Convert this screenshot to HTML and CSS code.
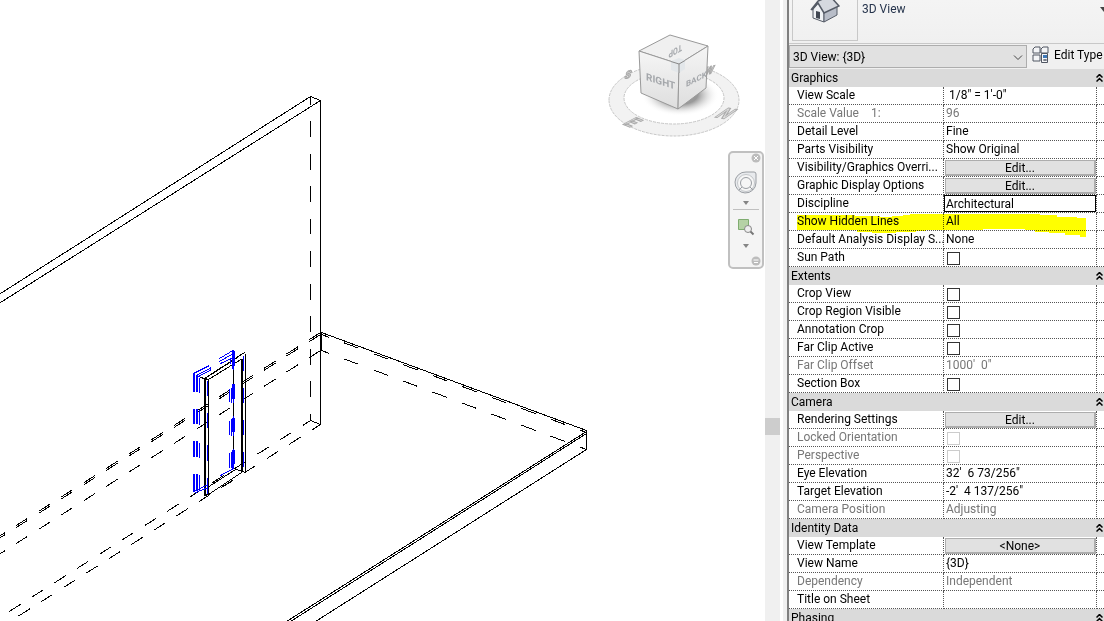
FILE: index.html
```
<!DOCTYPE html>
<html lang="en">
<head>
  <meta charset="UTF-8">
  <title>3D View</title>
  <link rel="stylesheet" href="styles.css">
</head>
<body>
  <main class="viewport">
    <svg class="drawing" aria-label="3D model">
      <g transform="translate(.5 .5)">
        <!-- wall -->
        <path d="M0 293L310 96L320 100L0 302M320 100V424L310 420"/>
        <path d="M310 96V420" stroke-dasharray="16 16.5" stroke-dashoffset="8"/>
        <path d="M310 420L0 616.5" stroke-dasharray="13.3 13.4" stroke-dashoffset="3.9"/>
        <path d="M320 424L11 620" stroke-dasharray="13.3 13.4" stroke-dashoffset="3"/>
        <!-- floor -->
        <path d="M321 350V332L586 430V449L315 621M586 431L286 621M586 433L290 621"/>
        <path d="M321 334L586 432M321 350L586 449" stroke-dasharray="15.5 16" stroke-dashoffset="7.5"/>
        <path d="M320 332L0 535M320 334L0 537M320 350L0 553" stroke-dasharray="13.3 13.4"/>
        <!-- door, near side -->
        <path d="M204 378V495M205 378V495M208 379V494M241 359V471M242 358V471M245 353V472M233 368V468L245 472M204 378L244 352L245 353M208 379L242 358M206 377L237 357M200 377L208 379M204 495L208 494M207 487L235 469M208 494L244 470M221 487L231 481"/>
        <!-- door, hidden side -->
        <g class="blue">
          <path d="M193 373V391M194 373V391M196 374V391M197 374V391M199 377V392M193 408V423M194 408V423M196 408V423M197 408V423M199 409V424M193 440V456M194 440V456M196 440V456M197 440V456M199 442V457M193 473V490M194 473V490M196 473V490M197 473V490M199 474V490"/>
          <path d="M207 380V395M207 412V427M207 444V460M207 477V493"/>
          <path d="M232 349V368M233 349V369M234 350V365M230 357V363M232 383V398M233 383V402M234 383V398M229 388V401M231 387V402M232 417V431M233 415V435M234 417V431M229 420V434M231 418V435M232 449V467M233 448V468M234 449V463M229 452V467M231 451V467"/>
          <path d="M243 355V370M243 387V402M243 419V434M243 451V466"/>
          <path d="M193 373L209 365M196 375L211 367M198 376L211 369M219 358L234 349M219 361L233 353M220 363L235 356M193 491L208 484M195 492L208 487M220 475L233 468"/>
        </g>
      </g>
    </svg>

    <svg class="viewcube" width="140" height="110" viewBox="604 30 140 110" aria-label="ViewCube">
      <defs>
        <radialGradient id="shade"><stop offset="45%" stop-color="#999"/><stop offset="100%" stop-color="#fff" stop-opacity="0"/></radialGradient>
        <linearGradient id="side" x2="0" y2="1"><stop stop-color="#f5f5f5"/><stop offset="1" stop-color="#dedede"/></linearGradient>
      </defs>
      <path fill="#f2f2f2" fill-rule="evenodd" stroke="#c6c6c6" stroke-dasharray="3 1" d="M609 100a65 36 0 0 1 130 0a65 36 0 0 1-130 0zM624 98a50 26 0 0 0 100 0a50 26 0 0 0-100 0z"/>
      <ellipse cx="680" cy="95" rx="39" ry="21" fill="url(#shade)"/>
      <g class="compass">
        <text transform="translate(622 124) rotate(22) skewX(-40)">E</text>
        <text transform="translate(714 117) rotate(10) skewX(-45)">N</text>
        <text class="far" transform="translate(624 79) rotate(-12) skewX(-30)">S</text>
        <text class="far" transform="translate(704 75) rotate(-12) skewX(-30)">W</text>
      </g>
      <g stroke="#999" stroke-linejoin="round">
        <path fill="#f0f0f0" d="M670 35L708 46L679 64L639 51z"/>
        <path fill="url(#side)" d="M639 51L679 64L678 109L641 93z"/>
        <path fill="url(#side)" d="M679 64L708 46L706 88L678 109z"/>
      </g>
      <path fill="#e3e7ea" d="M671 61l8-3 6 2v9l-6 4-8-3z"/>
      <path stroke="#888" d="M671 61.500L679 64L685 60.500M679 64V73" fill="none"/>
      <g class="face">
        <text transform="translate(646 80) skewY(18)">RIGHT</text>
        <text class="back" transform="translate(686 87) skewY(-27)">BACK</text>
        <text class="top" transform="translate(682 44) rotate(150) skewX(-30)">TOP</text>
      </g>
    </svg>

    <nav class="navbar" aria-label="Navigation bar">
      <button class="mini end" aria-label="Close"><svg width="10" height="10"><circle cx="5" cy="5" r="4.500" fill="#bcbcbc"/><path d="M3 3l4 4M7 3L3 7" stroke="#fff"/></svg></button>
      <button class="wheel" aria-label="Steering wheel"><svg width="24" height="24" fill="none" stroke="#9a9ea3"><path fill="#e8eaed" d="M12 1h8q2 0 2 2v9a10.500 10.500 0 1 1-10-11z"/><circle cx="12" cy="12" r="8.500" fill="#f6f6f6" stroke="#c4c7ca"/><circle cx="12" cy="12" r="5.500"/><path d="M5 19l3-3M16 16l3 3"/></svg></button>
      <button class="mini" aria-label="Wheel options"><svg width="6" height="4"><path fill="#858585" d="M0 0h6L3 4z"/></svg></button>
      <hr>
      <button class="zoom" aria-label="Zoom"><svg width="18" height="18" fill="none"><path fill="#b5d2a5" stroke="#7fac70" d="M1.500 1.500h10v10h-10z"/><circle cx="11" cy="11" r="3.500" fill="#eee" stroke="#888"/><path stroke="#777" stroke-width="2" d="M13.500 13.500l3 3"/></svg></button>
      <button class="mini" aria-label="Zoom options"><svg width="6" height="4"><path fill="#858585" d="M0 0h6L3 4z"/></svg></button>
      <button class="mini end last" aria-label="Minimize"><svg width="10" height="10"><circle cx="5" cy="5" r="4.500" fill="#bcbcbc"/><path d="M2.500 4h5M3 6.500h4" stroke="#fff"/></svg></button>
    </nav>
  </main>

  <div class="scrollbar"><div class="thumb"></div></div>

  <aside class="panel">
    <header class="family">
      <div class="preview">
        <svg width="30" height="24" viewBox="0 0 30 24">
          <path fill="#f0f2f5" stroke="#555b66" d="M3 9V18L14 22V9L8 3z"/>
          <path fill="#b8bdc8" stroke="#555b66" d="M14 10L27 6V15L14 22z"/>
          <path fill="#d5d8df" stroke="#555b66" stroke-width="1.500" d="M1 10L8 1L20-4L29 6L14 13L8 3L2 10"/>
          <path fill="#414752" d="M6 11l4 1v7l-4-1z"/>
        </svg>
      </div>
      <span class="family-name">3D View</span>
      <svg class="caret" width="8" height="5"><path fill="#444" d="M0 0h8L4 5z"/></svg>
    </header>

    <div class="type-row">
      <div class="type-select">
        <select aria-label="View"><option>3D View: {3D}</option></select>
        <svg width="10" height="6" fill="none" stroke="#444"><path d="M1 .5l4 4 4-4"/></svg>
      </div>
      <button class="edit-type">
        <svg width="18" height="18" viewBox="0 0 18 18" fill="#f4f5f7" stroke="#505662">
          <path d="M1 3l2-2h5v6H1zM9 3l2-2h5v6H9zM1 9h7v6H1z"/><path d="M9.500 7.500h6v9h-6z"/><path fill="#3d78b8" stroke="none" d="M11 9h4v3h-4z"/><path d="M11 14h4M13 13v2"/>
        </svg>
        Edit Type
      </button>
    </div>

    <table class="props">
      <colgroup><col class="col-name"><col><col class="col-end"></colgroup>
      <tbody>
        <tr class="group"><th colspan="3">Graphics <button aria-label="Collapse Graphics"><svg width="7" height="8"><path d="M.5 3.500l3-3 3 3M.5 7.500l3-3 3 3"/></svg></button></th></tr>
        <tr><th>View Scale</th><td>&nbsp;1/8" = 1'-0"</td><td></td></tr>
        <tr class="off"><th>Scale Value &nbsp;&nbsp; 1:</th><td>96</td><td></td></tr>
        <tr><th>Detail Level</th><td>Fine</td><td></td></tr>
        <tr><th>Parts Visibility</th><td>Show Original</td><td></td></tr>
        <tr><th>Visibility/Graphics Overri...</th><td><button class="edit">Edit...</button></td><td></td></tr>
        <tr><th>Graphic Display Options</th><td><button class="edit">Edit...</button></td><td></td></tr>
        <tr><th><label for="discipline">Discipline</label></th><td><select id="discipline"><option>Architectural</option></select></td><td></td></tr>
        <tr><th class="marked">
          <svg class="marker" width="290" height="25"><path d="M0 2H58V3H83V4H95V3H106V2H113V1H243V2H260V4H280V5H289V24H283V22H268V20H252V19H238V17H228V16H186V17H129V18H119V19H99V20H75V19H60V17H0z"/></svg>
          <span>Show Hidden Lines</span></th><td><span>All</span></td><td></td></tr>
        <tr><th>Default Analysis Display S...</th><td>None</td><td></td></tr>
        <tr><th><label for="sun">Sun Path</label></th><td><input type="checkbox" id="sun"></td><td></td></tr>
      </tbody>
      <tbody>
        <tr class="group"><th colspan="3">Extents <button aria-label="Collapse Extents"><svg width="7" height="8"><path d="M.5 3.500l3-3 3 3M.5 7.500l3-3 3 3"/></svg></button></th></tr>
        <tr><th><label for="crop">Crop View</label></th><td><input type="checkbox" id="crop"></td><td></td></tr>
        <tr><th><label for="region">Crop Region Visible</label></th><td><input type="checkbox" id="region"></td><td></td></tr>
        <tr><th><label for="anno">Annotation Crop</label></th><td><input type="checkbox" id="anno"></td><td></td></tr>
        <tr><th><label for="far">Far Clip Active</label></th><td><input type="checkbox" id="far"></td><td></td></tr>
        <tr class="off"><th>Far Clip Offset</th><td>1000'&nbsp; 0"</td><td></td></tr>
        <tr><th><label for="box">Section Box</label></th><td><input type="checkbox" id="box"></td><td></td></tr>
      </tbody>
      <tbody>
        <tr class="group"><th colspan="3">Camera <button aria-label="Collapse Camera"><svg width="7" height="8"><path d="M.5 3.500l3-3 3 3M.5 7.500l3-3 3 3"/></svg></button></th></tr>
        <tr><th>Rendering Settings</th><td><button class="edit">Edit...</button></td><td></td></tr>
        <tr class="off"><th><label for="locked">Locked Orientation</label></th><td><input type="checkbox" id="locked" disabled></td><td></td></tr>
        <tr class="off"><th><label for="persp">Perspective</label></th><td><input type="checkbox" id="persp" disabled></td><td></td></tr>
        <tr><th>Eye Elevation</th><td>32'&nbsp; 6 73/256"</td><td></td></tr>
        <tr><th>Target Elevation</th><td>-2'&nbsp; 4 137/256"</td><td></td></tr>
        <tr class="off"><th>Camera Position</th><td>Adjusting</td><td></td></tr>
      </tbody>
      <tbody>
        <tr class="group"><th colspan="3">Identity Data <button aria-label="Collapse Identity Data"><svg width="7" height="8"><path d="M.5 3.500l3-3 3 3M.5 7.500l3-3 3 3"/></svg></button></th></tr>
        <tr><th>View Template</th><td><button class="edit">&lt;None&gt;</button></td><td></td></tr>
        <tr><th>View Name</th><td>{3D}</td><td></td></tr>
        <tr class="off"><th>Dependency</th><td>Independent</td><td></td></tr>
        <tr><th>Title on Sheet</th><td></td><td></td></tr>
      </tbody>
      <tbody>
        <tr class="group"><th colspan="3">Phasing <button aria-label="Collapse Phasing"><svg width="7" height="8"><path d="M.5 3.500l3-3 3 3M.5 7.500l3-3 3 3"/></svg></button></th></tr>
      </tbody>
    </table>
  </aside>
</body>
</html>
```
FILE: styles.css
```
* {
  box-sizing: border-box;
  margin: 0;
  padding: 0;
}

body {
  display: flex;
  height: 100vh;
  overflow: hidden;
  background: white;
  font: 12px/16px Roboto, "Open Sans", sans-serif;
  color: #000;
}

button,
select {
  font: inherit;
  color: inherit;
  background: none;
  border: none;
  border-radius: 0;
  appearance: none;
}

svg {
  display: block;
}

/* model area */
.viewport {
  flex: 1;
  min-width: 0;
  position: relative;
  overflow: hidden;
}

.drawing {
  width: 100%;
  height: 100%;
  fill: none;
  stroke: #000;
  shape-rendering: crispEdges;
}

.blue {
  stroke: #00f;
}

.viewcube {
  position: absolute;
  top: 30px;
  right: 21px;
}

.compass {
  font-size: 16px;
  font-weight: bold;
  fill: #ddd;
  stroke: #aaa;
}

.compass .far {
  font-size: 10px;
}

.face {
  font-size: 10px;
  font-weight: bold;
  fill: #a4a7ab;
}

.face .back,
.face .top {
  font-size: 8px;
}

.navbar {
  position: absolute;
  top: 151px;
  right: 1px;
  width: 36px;
  height: 118px;
  display: flex;
  flex-direction: column;
  align-items: center;
  background: #f4f4f4;
  border: 2px solid #c0c0c0;
  border-radius: 5px;
}

.navbar hr {
  width: 26px;
  margin: 4px 0 8px;
  border: none;
  border-top: 1px solid #c0c0c0;
}

.navbar .wheel {
  margin: 8px 0 6px;
}

.navbar .zoom {
  margin-bottom: 8px;
}

.navbar .end {
  align-self: flex-end;
  margin-right: 1px;
}

.navbar .last {
  margin: auto 1px 1px 0;
}

.scrollbar {
  width: 15px;
  padding-top: 418px;
  background: #f0f0f0;
}

.thumb {
  height: 17px;
  background: #cdcdcd;
}

/* properties palette */
.panel {
  width: 321px;
  margin-left: 3px;
  border-left: 4px solid #f0f0f0;
  box-shadow: inset 2px 0 #808080;
  padding-left: 2px;
  overflow: hidden;
}

.family {
  display: flex;
  height: 44px;
  padding-left: 3px;
  background: linear-gradient(#f4f4f4, #f0f0f0);
  border-bottom: 1px solid #c8c8c8;
  color: #26344c;
}

.preview {
  width: 66px;
  height: 41px;
  padding-left: 17px;
  border: 1px solid #c8c8c8;
  border-top: none;
}

.family-name {
  margin: 1px 0 0 4px;
}

.caret {
  margin: 7px -4px 0 auto;
}

.type-row {
  display: flex;
  height: 25px;
  padding-top: 1px;
  background: #f0f0f0;
}

.type-select {
  position: relative;
  flex: 1;
}

.type-select select {
  width: 100%;
  height: 23px;
  padding-left: 3px;
  background: #e1e1e1;
  border: 1px solid #adadad;
}

.type-select svg {
  position: absolute;
  top: 10px;
  right: 4px;
}

.edit-type {
  display: flex;
  align-items: center;
  gap: 4px;
  width: 77px;
  height: 20px;
  padding-left: 5px;
  white-space: nowrap;
}

.props {
  width: 100%;
  table-layout: fixed;
  border-spacing: 0;
}

.col-name {
  width: 155px;
}

.col-end {
  width: 7px;
}

.props th,
.props td {
  height: 18px;
  padding: 0 0 1px 8px;
  border-bottom: 1px dotted #555;
  border-right: 1px dotted #555;
  font-weight: normal;
  line-height: 16px;
  text-align: left;
  white-space: nowrap;
}

.props td {
  padding-left: 2px;
}

.props td:last-child {
  border-right: none;
}

.props .group th {
  padding: 0 0 0 2px;
  background: #dadada;
  border: none;
  line-height: 18px;
}

.group button {
  float: right;
  padding: 5px 1px;
}

.group svg {
  fill: none;
  stroke: #000;
  stroke-width: 1.5;
}

.off {
  color: #777;
}

.props .edit {
  display: block;
  width: calc(100% + 1px);
  height: 16px;
  margin: 1px 0 -1px -1px;
  line-height: 14px;
  background: #e1e1e1;
  border: 1px solid #adadad;
  border-right-width: 2px;
  border-bottom-width: 2px;
}

.props select {
  display: block;
  width: calc(100% + 2px);
  height: 17px;
  margin: 0 0 -1px -2px;
  padding-left: 1px;
  line-height: 14px;
  border: 1px solid #000;
}

.props input {
  display: block;
  width: 13px;
  height: 13px;
  margin: 2px 0 0 1px;
  appearance: none;
  background: white;
  border: 1px solid #333;
}

.props input:disabled {
  border-color: #ccc;
}

/* highlighter stroke over the row */
.marked {
  position: relative;
}

.marker {
  position: absolute;
  top: 0;
  left: 8px;
  fill: #ff0;
  mix-blend-mode: multiply;
}
```
